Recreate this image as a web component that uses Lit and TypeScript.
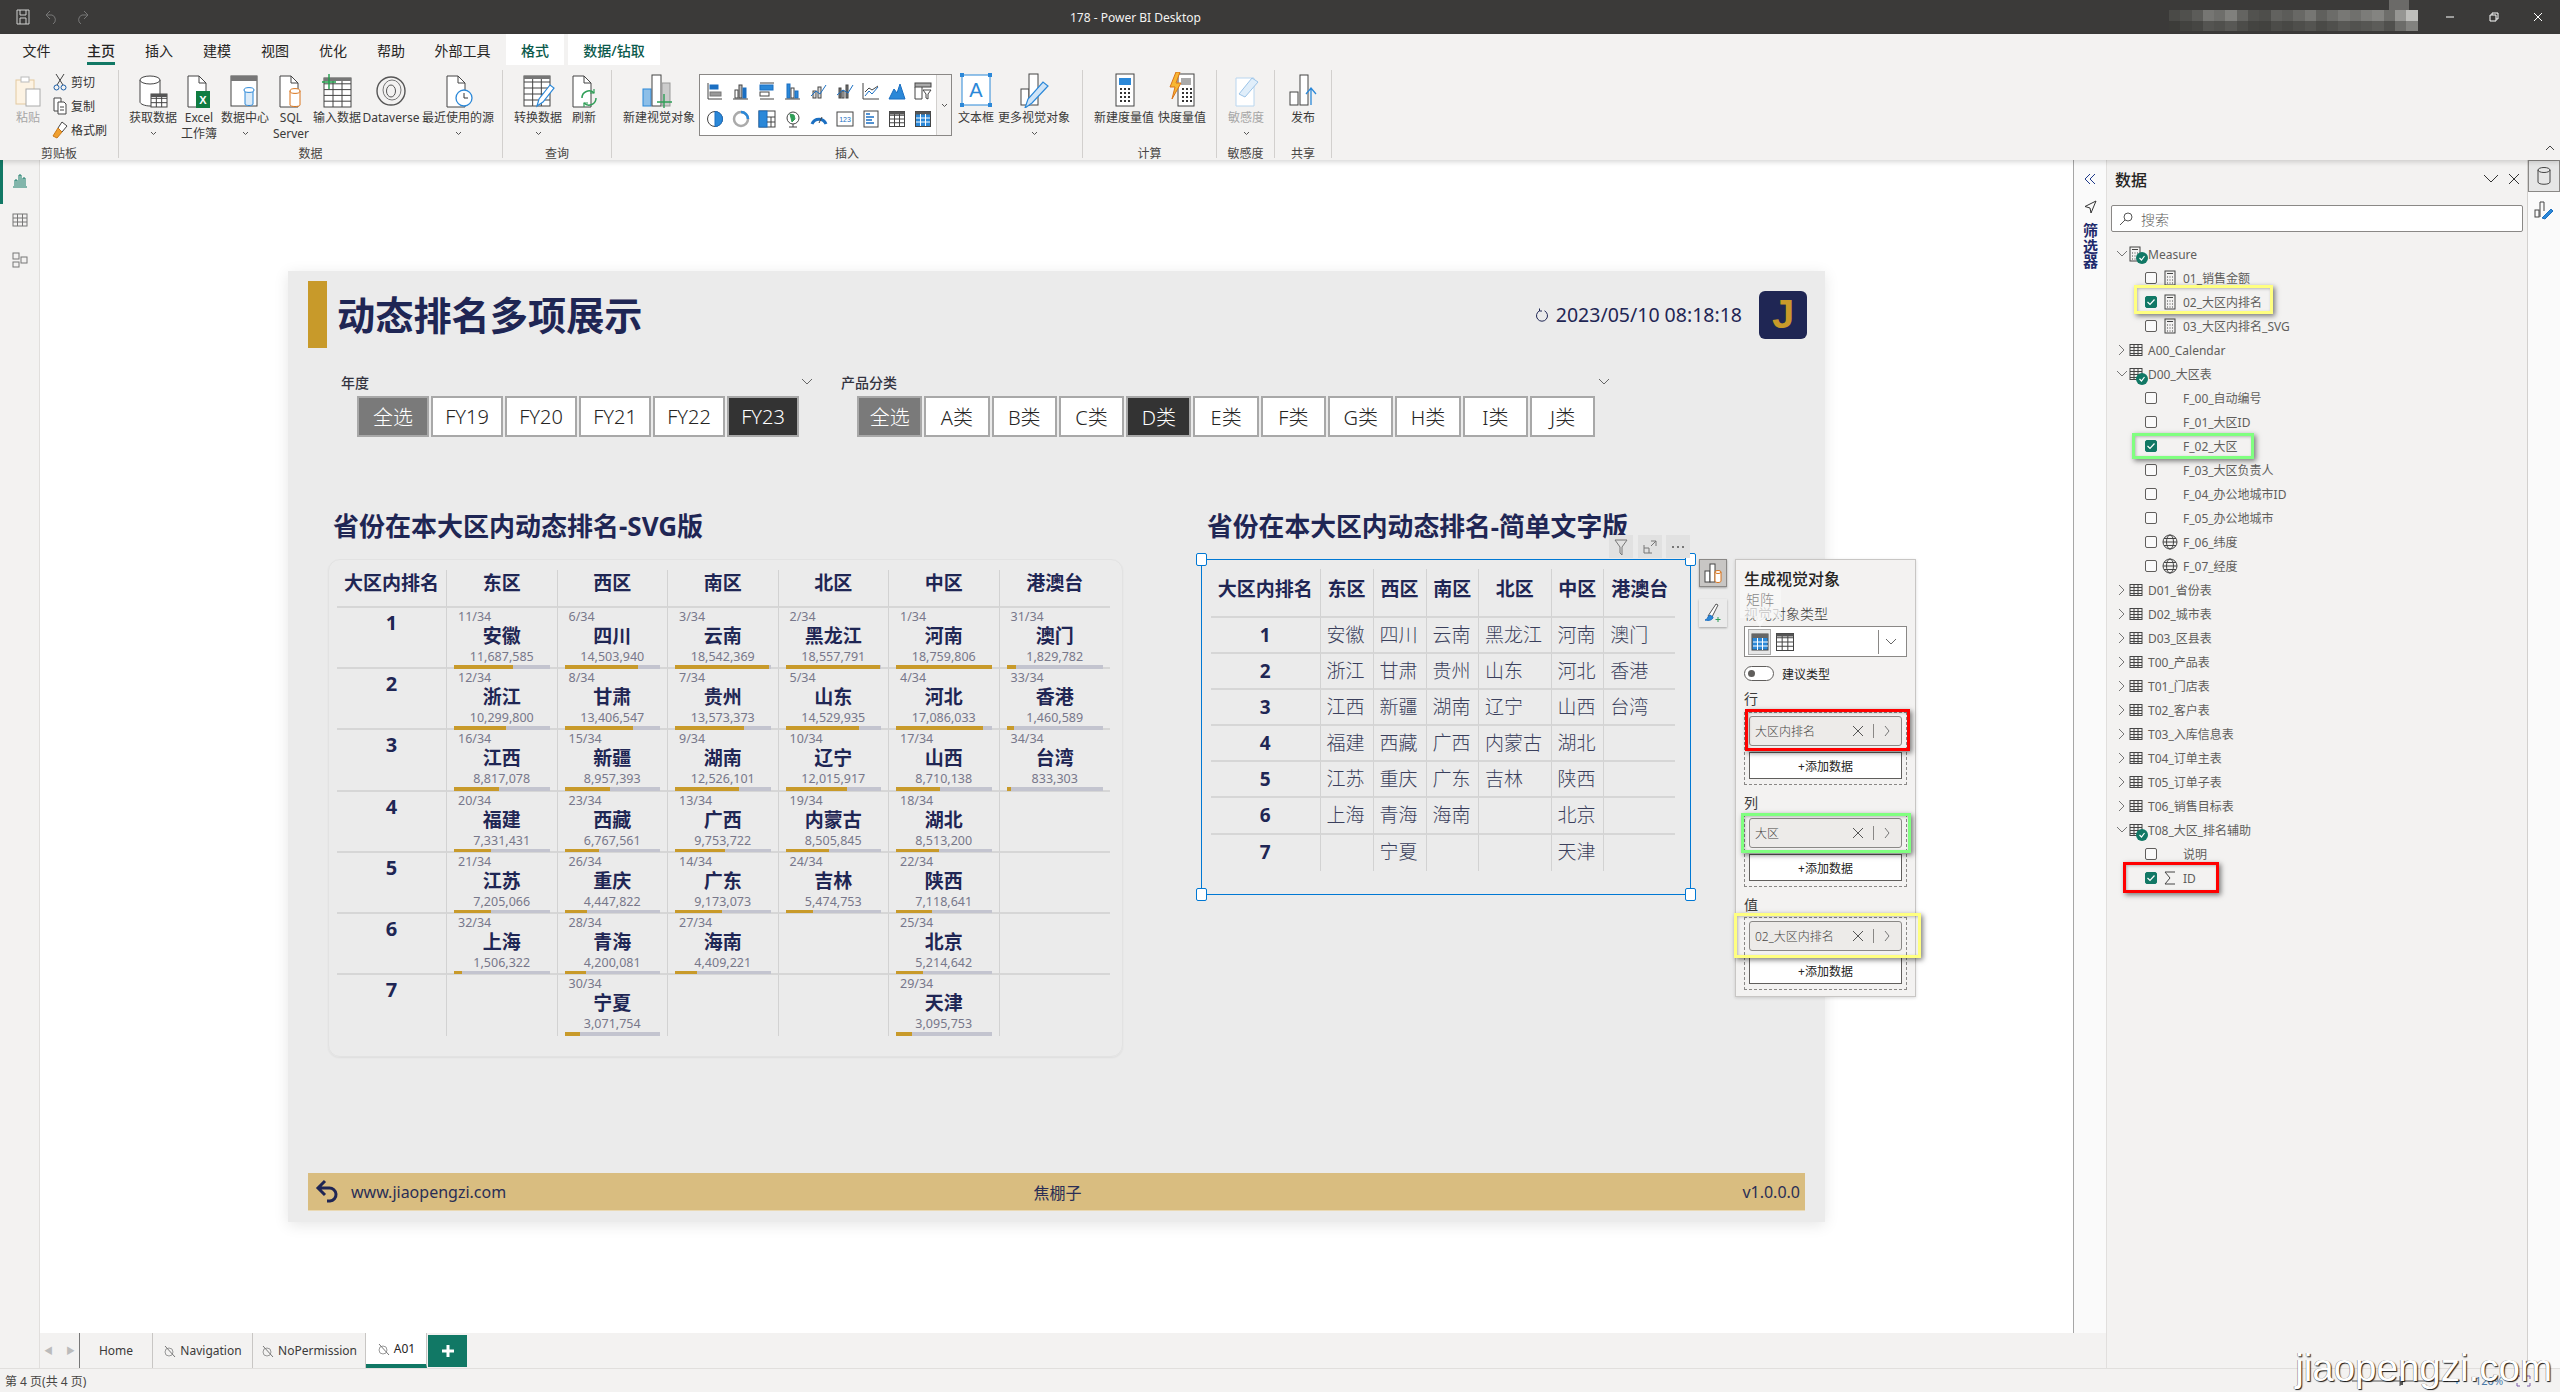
import { LitElement, html, css, svg } from "lit";
import { customElement } from "lit/decorators.js";

const MAX_VALUE = 18759806;

// small helper for inline icons
const ic = (w: number, h: number, body: unknown) => html`<svg
  width=${w}
  height=${h}
  viewBox="0 0 ${w} ${h}"
  fill="none"
  stroke="#444"
  stroke-width="1"
>${body}</svg>`;

const tablePart = (x: number, y: number, w: number, h: number, c: number, r: number, head = "#777") => {
  const lines: unknown[] = [];
  for (let i = 1; i < c; i++) lines.push(svg`<path d="M${x + (w * i) / c} ${y}v${h}"/>`);
  for (let i = 1; i < r; i++) lines.push(svg`<path d="M${x} ${y + (h * i) / r}h${w}"/>`);
  return svg`<rect x=${x} y=${y} width=${w} height=${h} fill="#fff"/>${lines}<rect x=${x} y=${y} width=${w} height="3" fill=${head} stroke="none"/>`;
};

const docPart = (stroke = "#444") =>
  svg`<path d="M6 2h11l7 7v24H6z" fill="#fff" stroke=${stroke}/><path d="M17 2v7h7" stroke=${stroke}/>`;

const R: Record<string, unknown> = {
  paste: ic(30, 34, svg`<rect x="3" y="6" width="18" height="24" fill="#fdf3e3" stroke="#e3c9a0"/><rect x="8" y="3" width="8" height="5" fill="#fff" stroke="#bbb"/><rect x="13" y="15" width="14" height="17" fill="#fff" stroke="#aaa"/>`),
  getdata: ic(34, 34, svg`<path d="M4 6v22c0 2 5 4 10 4s10-2 10-4V6" fill="#fff"/><ellipse cx="14" cy="6" rx="10" ry="4" fill="#fff"/>${tablePart(15, 20, 16, 13, 3, 3, "#555")}`),
  excel: ic(34, 34, svg`${docPart()}<rect x="14" y="17" width="14" height="17" fill="#107c41" stroke="none"/><text x="21" y="30" font-size="11" font-weight="700" fill="#fff" stroke="none" text-anchor="middle" font-family="Liberation Sans">X</text>`),
  hub: ic(34, 34, svg`<rect x="3" y="2" width="26" height="30" fill="#fff"/><rect x="3" y="2" width="26" height="5" fill="#777" stroke="none"/><path d="M17 16v14c0 2 8 2 8 0V16" fill="#dcebf8" stroke="#2b88d8"/><ellipse cx="21" cy="16" rx="5" ry="2.4" fill="#fff" stroke="#2b88d8"/>`),
  sql: ic(34, 34, svg`${docPart()}<path d="M16 17v14c0 2 10 2 10 0V17" fill="#fff" stroke="#d9731a"/><ellipse cx="21" cy="17" rx="5" ry="2.4" fill="#fff" stroke="#d9731a"/>`),
  enter: ic(34, 34, svg`${tablePart(4, 4, 27, 29, 3, 5)}<path d="M9 0v15M2 8h14" stroke="#1e9e4a" stroke-width="1.4"/>`),
  dataverse: ic(34, 34, svg`<ellipse cx="17" cy="17" rx="14" ry="14" stroke="#555" stroke-width="1.4"/><ellipse cx="18" cy="16" rx="9" ry="10" stroke="#777"/><ellipse cx="17" cy="17" rx="4.5" ry="6" stroke="#555"/>`),
  recent: ic(34, 34, svg`${docPart()}<circle cx="23" cy="24" r="8" fill="#fff" stroke="#2b88d8" stroke-width="1.3"/><path d="M23 19v5h4" stroke="#333"/>`),
  transform: ic(34, 34, svg`${tablePart(3, 2, 26, 30, 3, 5)}<path d="M16 32l2-7 11-14 4 3-11 14z" fill="#fff" stroke="#2b88d8" stroke-width="1.2"/>`),
  refresh: ic(34, 34, svg`${docPart()}<path d="M15 24a7 7 0 0 1 12-5M29 24a7 7 0 0 1-12 5" stroke="#2f9e57" stroke-width="1.5"/><path d="M27 15v4h-4M17 33v-4h4" stroke="#2f9e57" stroke-width="1.2"/>`),
  newvisual: ic(34, 36, svg`<rect x="1" y="17" width="8" height="17" fill="#8dbfe8" stroke="#2b88d8"/><rect x="10" y="3" width="9" height="31" fill="#fff"/><rect x="20" y="11" width="8" height="23" fill="#ccc" stroke="#999"/><path d="M22 22v14M15 30h15" stroke="#2f9e57" stroke-width="1.4"/>`),
  textbox: ic(34, 36, svg`<rect x="3" y="3" width="28" height="30" fill="#fff" stroke="#2b88d8"/><rect x="1" y="1" width="4" height="4" fill="#2b88d8" stroke="none"/><rect x="29" y="1" width="4" height="4" fill="#2b88d8" stroke="none"/><rect x="1" y="31" width="4" height="4" fill="#2b88d8" stroke="none"/><rect x="29" y="31" width="4" height="4" fill="#2b88d8" stroke="none"/><text x="17" y="25" font-size="20" fill="#2b88d8" stroke="none" text-anchor="middle" font-family="Liberation Sans">A</text>`),
  morevis: ic(34, 36, svg`<rect x="4" y="17" width="8" height="16" fill="#fff"/><rect x="12" y="2" width="9" height="31" fill="#fff"/><path d="M8 36l3-9 15-17 5 4-16 17z" fill="#cfe4f7" stroke="#2b88d8" stroke-width="1.2"/>`),
  measure: ic(30, 36, svg`<rect x="7" y="2" width="18" height="32" fill="#fff"/><rect x="10" y="6" width="12" height="7" fill="#2b88d8" stroke="none"/><path d="M11 17h2M15 17h2M19 17h2M11 21h2M15 21h2M19 21h2M11 25h2M15 25h2M19 25h2M11 29h2M15 29h2M19 29h2" stroke="#333" stroke-width="2"/>`),
  quick: ic(30, 36, svg`<rect x="11" y="2" width="16" height="32" fill="#fff"/><rect x="14" y="6" width="10" height="7" fill="#aaa" stroke="none"/><path d="M15 17h2M19 17h2M23 17h2M15 21h2M19 21h2M23 21h2M15 25h2M19 25h2M23 25h2M15 29h2M19 29h2M23 29h2" stroke="#333" stroke-width="2"/><path d="M9 0l-6 15h5l-3 12 9-16H9l4-11z" fill="#f7b733" stroke="#d9731a"/>`),
  sensitivity: ic(30, 36, svg`<path d="M5 6h18v28H5z" fill="#fff" stroke="#b9d6ef"/><path d="M8 22l13-16 6 4-13 15z" fill="#e0eefa" stroke="#9cc4e8"/>`),
  publish: ic(30, 36, svg`<rect x="2" y="20" width="8" height="13" fill="#fff"/><rect x="12" y="3" width="8" height="30" fill="#fff"/><path d="M23 33V17M18 22l5-6 5 6" stroke="#2b88d8" stroke-width="1.3"/>`),
};

const S: Record<string, unknown> = {
  cut: ic(14, 18, svg`<path d="M3 1l7 11M11 1L4 12"/><circle cx="3.5" cy="14.5" r="2.5" stroke="#1b5fa8"/><circle cx="10.5" cy="14.5" r="2.5" stroke="#1b5fa8"/>`),
  copy: ic(14, 18, svg`<path d="M1 1h7v13H1z" fill="#fff"/><path d="M5 5h6l2 2v10H5z" fill="#fff"/><path d="M7 10h4M7 13h4"/>`),
  brush: ic(16, 18, svg`<path d="M10 1l5 4-5 6-4-4z" fill="#fff"/><path d="M6 7l4 4-5 6-4-2z" fill="#f0a030" stroke="#c9791a"/>`),
};

const G: unknown[] = [
  ic(18, 18, svg`<path d="M2 1v16h14"/><rect x="4" y="3" width="8" height="4" fill="#1b6fc2" stroke="#1b6fc2"/><rect x="4" y="10" width="11" height="4" fill="#999" stroke="#777"/>`),
  ic(18, 18, svg`<rect x="3" y="8" width="3" height="8"/><rect x="7" y="3" width="3" height="13" fill="#bbb"/><rect x="11" y="6" width="3" height="10" fill="#1b6fc2" stroke="#1b6fc2"/><path d="M1 17h15"/>`),
  ic(18, 18, svg`<path d="M2 1h14M2 17h14"/><rect x="2" y="3" width="13" height="5" fill="#2b88d8" stroke="#1b6fc2"/><rect x="2" y="10" width="9" height="4" fill="#fff"/>`),
  ic(18, 18, svg`<rect x="3" y="2" width="3" height="14" fill="#2b88d8" stroke="#1b6fc2"/><rect x="7" y="6" width="3" height="10" fill="#fff"/><rect x="11" y="9" width="3" height="7" fill="#2b88d8" stroke="#1b6fc2"/><path d="M1 17h15"/>`),
  ic(18, 18, svg`<rect x="3" y="9" width="3" height="7" fill="#ddd"/><rect x="8" y="5" width="3" height="11" fill="#ddd"/><path d="M1 14l5-5 4 3 6-9" stroke="#1b6fc2"/>`),
  ic(18, 18, svg`<rect x="3" y="6" width="2" height="10" fill="#777"/><rect x="6" y="9" width="2" height="7" fill="#ccc"/><rect x="10" y="3" width="2" height="13" fill="#777"/><path d="M1 13l6-5 5 3 5-8" stroke="#1b6fc2"/>`),
  ic(18, 18, svg`<path d="M1 1v16h16"/><path d="M3 14l4-5 3 3 6-7" stroke="#1b6fc2"/><path d="M3 10l4-4 3 2 6-4"/>`),
  ic(18, 18, svg`<path d="M1 17l5-10 3 4 3-9 5 15z" fill="#2b88d8" stroke="#1b6fc2"/>`),
  ic(18, 18, svg`<rect x="1" y="1" width="16" height="4" fill="#aaa"/><path d="M1 5v12h7V5M9 8h8l-3 4v5l-2-1v-4z"/>`),
  ic(18, 18, svg`<circle cx="9" cy="9" r="7.5"/><path d="M9 9V1.5a7.5 7.5 0 0 1 0 15z" fill="#2b88d8" stroke="#1b6fc2"/>`),
  ic(18, 18, svg`<circle cx="9" cy="9" r="7" stroke="#aaa" stroke-width="2.5"/><path d="M9 2a7 7 0 0 1 7 7" stroke="#2b88d8" stroke-width="2.5"/>`),
  ic(18, 18, svg`<rect x="1" y="1" width="16" height="16"/><rect x="1" y="1" width="8" height="16" fill="#2b88d8" stroke="#1b6fc2"/><path d="M9 7h8M9 12h8M13 7v10"/>`),
  ic(18, 18, svg`<circle cx="9" cy="8" r="6"/><path d="M6 4l4 1 1 4-3 3z" fill="#2f9e57" stroke="#2f9e57"/><path d="M9 14v3M5 17h8"/>`),
  ic(18, 18, svg`<path d="M2 14a7.5 7.5 0 0 1 14 0" stroke="#1b6fc2" stroke-width="3"/><path d="M9 13l3-6"/>`),
  ic(18, 18, svg`<rect x="1" y="2" width="16" height="14"/><text x="9" y="12" font-size="7" fill="#1b6fc2" stroke="none" text-anchor="middle" font-family="Liberation Sans">123</text>`),
  ic(18, 18, svg`<rect x="2" y="1" width="14" height="16"/><path d="M4 4h4M4 7h8M4 10h6M4 13h8" stroke="#1b6fc2" stroke-width="1.5"/>`),
  ic(18, 18, svg`${tablePart(1.5, 1.5, 15, 15, 3, 4, "#555")}`),
  ic(18, 18, svg`<rect x="1.5" y="1.5" width="15" height="15" fill="#2b88d8"/><rect x="1.5" y="1.5" width="15" height="3" fill="#555" stroke="none"/><path d="M6.5 4v12M11.5 4v12M2 8h14M2 12h14" stroke="#fff"/>`),
];

type Cell = [string, string, string] | null;
const REGIONS = ["东区", "西区", "南区", "北区", "中区", "港澳台"];
const RANKS: Cell[][] = [
  [["11/34", "安徽", "11,687,585"], ["6/34", "四川", "14,503,940"], ["3/34", "云南", "18,542,369"], ["2/34", "黑龙江", "18,557,791"], ["1/34", "河南", "18,759,806"], ["31/34", "澳门", "1,829,782"]],
  [["12/34", "浙江", "10,299,800"], ["8/34", "甘肃", "13,406,547"], ["7/34", "贵州", "13,573,373"], ["5/34", "山东", "14,529,935"], ["4/34", "河北", "17,086,033"], ["33/34", "香港", "1,460,589"]],
  [["16/34", "江西", "8,817,078"], ["15/34", "新疆", "8,957,393"], ["9/34", "湖南", "12,526,101"], ["10/34", "辽宁", "12,015,917"], ["17/34", "山西", "8,710,138"], ["34/34", "台湾", "833,303"]],
  [["20/34", "福建", "7,331,431"], ["23/34", "西藏", "6,767,561"], ["13/34", "广西", "9,753,722"], ["19/34", "内蒙古", "8,505,845"], ["18/34", "湖北", "8,513,200"], null],
  [["21/34", "江苏", "7,205,066"], ["26/34", "重庆", "4,447,822"], ["14/34", "广东", "9,173,073"], ["24/34", "吉林", "5,474,753"], ["22/34", "陕西", "7,118,641"], null],
  [["32/34", "上海", "1,506,322"], ["28/34", "青海", "4,200,081"], ["27/34", "海南", "4,409,221"], null, ["25/34", "北京", "5,214,642"], null],
  [null, ["30/34", "宁夏", "3,071,754"], null, null, ["29/34", "天津", "3,095,753"], null],
];

const tableIcon = ic(14, 14, svg`<rect x="1" y="1.5" width="12" height="11"/><path d="M1 4.5h12M1 7.5h12M1 10.5h12M5 1.5v11M9 1.5v11"/>`);
const calcIcon = ic(12, 16, svg`<rect x="1" y="1" width="10" height="14"/><path d="M3 3.5h6M3 7h1M5.5 7h1M8 7h1M3 10h1M5.5 10h1M8 10h1M3 13h1M5.5 13h1M8 13h1"/>`);
const globeIcon = ic(16, 16, svg`<circle cx="8" cy="8" r="7"/><ellipse cx="8" cy="8" rx="3.5" ry="7"/><path d="M1 8h14M2 4.5h12M2 11.5h12"/>`);
const sigmaIcon = ic(12, 16, svg`<path d="M11 2H1l5 6-5 6h10"/>`);
const caret = ic(7, 5, svg`<path d="M1 1l2.500 2.500L6 1" stroke="#555"/>`);
const badge = html`<span class="badge">${ic(8, 8, svg`<path d="M1.5 4l2 2 3-4" stroke="#fff" stroke-width="1.2"/>`)}</span>`;

type Row = { label: string; kind: "tgroup" | "child"; open?: boolean; icon?: string; used?: boolean; on?: boolean; hl?: string };
const TREE: Row[] = [
  { label: "Measure", kind: "tgroup", open: true, icon: "calc", used: true },
  { label: "01_销售金额", kind: "child", icon: "calc" },
  { label: "02_大区内排名", kind: "child", icon: "calc", on: true, hl: "hl-tree-y" },
  { label: "03_大区内排名_SVG", kind: "child", icon: "calc" },
  { label: "A00_Calendar", kind: "tgroup" },
  { label: "D00_大区表", kind: "tgroup", open: true, used: true },
  { label: "F_00_自动编号", kind: "child" },
  { label: "F_01_大区ID", kind: "child" },
  { label: "F_02_大区", kind: "child", on: true, hl: "hl-tree-g" },
  { label: "F_03_大区负责人", kind: "child" },
  { label: "F_04_办公地城市ID", kind: "child" },
  { label: "F_05_办公地城市", kind: "child" },
  { label: "F_06_纬度", kind: "child", icon: "globe" },
  { label: "F_07_经度", kind: "child", icon: "globe" },
  { label: "D01_省份表", kind: "tgroup" },
  { label: "D02_城市表", kind: "tgroup" },
  { label: "D03_区县表", kind: "tgroup" },
  { label: "T00_产品表", kind: "tgroup" },
  { label: "T01_门店表", kind: "tgroup" },
  { label: "T02_客户表", kind: "tgroup" },
  { label: "T03_入库信息表", kind: "tgroup" },
  { label: "T04_订单主表", kind: "tgroup" },
  { label: "T05_订单子表", kind: "tgroup" },
  { label: "T06_销售目标表", kind: "tgroup" },
  { label: "T08_大区_排名辅助", kind: "tgroup", open: true, used: true },
  { label: "说明", kind: "child" },
  { label: "ID", kind: "child", icon: "sigma", on: true, hl: "hl-tree-r" },
];

const BLUR = [
  [74, 80, 92, 118, 110, 128, 100, 82, 78, 98, 92, 104, 118, 96, 108, 120, 112, 124, 132, 110, 150, 190],
  [60, 66, 70, 84, 80, 88, 76, 68, 66, 76, 72, 78, 84, 74, 80, 88, 82, 86, 92, 80, 108, 130],
];

@customElement("app-root")
export class AppRoot extends LitElement {
  static styles = css`
    :host {
      display: block;
      width: 2560px;
      height: 1392px;
      overflow: hidden;
      position: relative;
      font-family: "Noto Sans", "Noto Sans CJK SC", sans-serif;
      font-size: 12px;
      color: #333;
      background: #f3f2f1;
      --navy: #1f2654;
    }

    /* title bar */
    .titlebar {
      height: 34px;
      background: #3b3a39;
      display: flex;
      align-items: center;
      color: #fff;
      position: relative;
    }
    .tb-icons {
      display: flex;
      gap: 14px;
      margin-left: 16px;
      width: 1000px;
    }
    .tb-title {
      margin-left: 54px;
      font-size: 12px;
      color: #f3f2f1;
    }
    .blur {
      position: absolute;
      left: 2169px;
      top: 10px;
      display: grid;
      grid-template-columns: repeat(22, 11.3px);
      grid-auto-rows: 10.5px;
    }
    .blur-top {
      position: absolute;
      left: 2389px;
      top: 0;
      width: 20px;
      height: 10px;
      background: #6b6a68;
    }
    .win {
      position: absolute;
      right: 0;
      top: 0;
      height: 34px;
      display: flex;
      align-items: center;
    }
    .win span {
      width: 44px;
      display: flex;
      justify-content: center;
    }

    /* ribbon */
    .ribbon {
      height: 126px;
      background: #f3f2f1;
      box-shadow: 0 2px 5px rgba(0, 0, 0, 0.16);
      position: relative;
      z-index: 3;
    }
    .tabs {
      height: 31px;
      display: flex;
      font-size: 14px;
      color: #252423;
    }
    .tab {
      display: flex;
      align-items: center;
      justify-content: center;
      position: relative;
      width: 58px;
    }
    .tab.first {
      width: 43px;
      margin-left: 15px;
      margin-right: 14px;
    }
    .tab.wide {
      width: 85px;
      margin-right: 1px;
    }
    .tab.ctx {
      background: #fff;
      color: #0b5a4c;
      font-weight: 500;
    }
    .tab.ctx2 {
      width: 92px;
      margin-left: 4px;
    }
    .tab.active {
      font-weight: 500;
    }
    .tab.active::after {
      content: "";
      position: absolute;
      left: 15px;
      right: 15px;
      bottom: 0;
      height: 3px;
      background: #117865;
    }
    .groups {
      display: flex;
      height: 95px;
    }
    .rgroup {
      display: flex;
      flex-direction: column;
      position: relative;
      margin-top: 5px;
      height: 88px;
      border-right: 1px solid #d2d0ce;
      box-sizing: border-box;
    }
    .g-clip { width: 119px; }
    .g-data { width: 384px; padding-left: 7px; }
    .g-query { width: 109px; padding-left: 9px; }
    .g-insert { width: 471px; padding-left: 7px; }
    .g-calc { width: 134px; padding-left: 11px; }
    .g-sens { width: 58px; }
    .g-share { width: 57px; }
    .g-items {
      display: flex;
      flex: 1;
      box-sizing: border-box;
      padding-top: 2px;
      min-height: 0;
    }
    .g-label {
      text-align: center;
      height: 15px;
      line-height: 15px;
      margin-bottom: -3px;
      color: #484644;
    }
    .g-data .g-label { margin-left: -7px; }
    .g-query .g-label { margin-left: -9px; }
    .g-insert .g-label { margin-left: -7px; }
    .g-calc .g-label { margin-left: -11px; }
    .item {
      display: flex;
      flex-direction: column;
      align-items: center;
      width: 54px;
      flex: none;
      line-height: 16px;
      text-align: center;
      color: #3b3a39;
    }
    .item .pic {
      height: 36px;
      display: flex;
      align-items: flex-end;
      justify-content: center;
      margin-bottom: 2px;
    }
    .item .more {
      height: 15px;
      display: flex;
      align-items: center;
    }
    .w38 { width: 38px; }
    .w40 { width: 40px; }
    .w44 { width: 44px; }
    .w52 { width: 52px; }
    .w56 { width: 56px; }
    .w58 { width: 58px; }
    .w60 { width: 60px; }
    .w72 { width: 72px; }
    .w80 { width: 80px; }
    .off { color: #a6a6a6; }
    .paste {
      margin-left: 8px;
      width: 40px;
    }
    .small-col {
      display: flex;
      flex-direction: column;
      gap: 5px;
      margin-left: 4px;
    }
    .small-row {
      display: flex;
      align-items: center;
      gap: 3px;
      height: 19px;
    }
    .small-row .si {
      width: 16px;
      display: flex;
      justify-content: center;
    }
    .gallery {
      width: 253px;
      height: 62px;
      background: #fff;
      border: 1px solid #8a8886;
      box-sizing: border-box;
      display: flex;
      margin: 2px 2px 0 0;
      flex: none;
    }
    .g-grid {
      display: grid;
      grid-template-columns: repeat(9, 26px);
      grid-template-rows: 28px 28px;
      padding: 2px 0 0 2px;
      flex: 1;
    }
    .g-grid span {
      display: flex;
      align-items: center;
      justify-content: center;
    }
    .g-more {
      width: 16px;
      background: #f3f2f1;
      border-left: 1px solid #d2d0ce;
      display: flex;
      justify-content: center;
      align-items: center;
    }
    .collapse {
      position: absolute;
      right: 5px;
      bottom: 5px;
    }

    /* workspace */
    .work {
      display: flex;
      height: 1208px;
    }
    .rail {
      width: 40px;
      flex: none;
      box-sizing: border-box;
      border-right: 1px solid #e1dfdd;
      display: flex;
      flex-direction: column;
      align-items: center;
      gap: 24px;
      padding-top: 12px;
      position: relative;
    }
    .rail::before {
      content: "";
      position: absolute;
      left: 0;
      top: 0;
      width: 3px;
      height: 44px;
      background: #117865;
    }
    .left-block {
      width: 2066px;
      flex: none;
      display: flex;
      flex-direction: column;
    }
    .upper {
      display: flex;
      height: 1173px;
    }
    .canvas {
      width: 2033px;
      flex: none;
      background: #fff;
      box-sizing: border-box;
      padding: 111px 0 0 248px;
    }
    .filters {
      width: 33px;
      flex: none;
      box-sizing: border-box;
      border-left: 1px solid #a6a6a6;
      background: #fafafa;
      display: flex;
      flex-direction: column;
      align-items: center;
      padding-top: 13px;
      gap: 15px;
    }
    .vtext {
      writing-mode: vertical-rl;
      font-size: 15px;
      font-weight: 700;
      line-height: 16px;
      margin-top: -6px;
      letter-spacing: 0.5px;
      color: #1f2a6b;
    }
    .pagetabs {
      flex: 1;
      display: flex;
      font-size: 12px;
      color: #3b3a39;
    }
    .pt {
      display: flex;
      align-items: center;
      justify-content: center;
      gap: 3px;
      box-sizing: border-box;
      border-right: 1px solid #c8c6c4;
      height: 35px;
    }
    .pt-nav { width: 40px; gap: 13px; color: #bbb; border-right-color: #777; font-size: 9px; }
    .pt-home { width: 73px; }
    .pt-nav2 { width: 100px; }
    .pt-noperm { width: 113px; }
    .pt-a01 {
      width: 61px;
      background: #fff;
      color: #252423;
      border-bottom: 4px solid #117865;
    }
    .pt-add {
      width: 39px;
      height: 32px;
      margin: 2px 0 0 1px;
      background: #117865;
      display: flex;
      align-items: center;
      justify-content: center;
    }

    /* report page */
    .page {
      width: 1537px;
      height: 951px;
      background: #ebebeb;
      box-shadow: 0 3px 14px rgba(0, 0, 0, 0.1);
      box-sizing: border-box;
      padding: 10px 20px 11px;
      display: flex;
      flex-direction: column;
      color: var(--navy);
    }
    .head {
      display: flex;
      align-items: center;
      height: 67px;
      flex: none;
    }
    .head .mark {
      width: 19px;
      height: 67px;
      background: #c89a2a;
    }
    .head h1 {
      margin: 0 0 0 10px;
      font-size: 38.2px;
      line-height: 72px;
      font-weight: 700;
    }
    .stamp {
      margin-left: auto;
      font-size: 19.5px;
      display: flex;
      align-items: center;
      gap: 7px;
      color: var(--navy);
    }
    .logo {
      width: 48px;
      height: 48px;
      margin: 0 -2px 0 17px;
      border-radius: 6px;
      background: var(--navy);
      color: #c89a2a;
      font-size: 40px;
      font-weight: 700;
      display: flex;
      align-items: center;
      justify-content: center;
      font-family: "Liberation Sans", sans-serif;
    }
    .slicers {
      display: flex;
      margin: 24px 0 0 33px;
      gap: 26px;
      flex: none;
    }
    .slicer { width: 474px; }
    .slicer.cat { width: 771px; }
    .sl-head {
      height: 20px;
      display: flex;
      align-items: center;
      justify-content: space-between;
      font-size: 14px;
      font-weight: 500;
      color: #33333f;
      padding-right: 2px;
    }
    .sl-btns {
      display: flex;
      gap: 2px;
      margin: 4px 0 0 16px;
    }
    .sl-btn {
      width: 72px;
      height: 41px;
      box-sizing: border-box;
      background: #fff;
      border: 2px solid #a8a8a8;
      color: #252423;
      font-size: 20px;
      display: flex;
      align-items: center;
      justify-content: center;
      font-weight: 300;
    }
    .cat .sl-btn { width: 65.3px; }
    .sl-btn.all {
      background: #7a7a7a;
      color: #fff;
    }
    .sl-btn.sel {
      background: #333;
      color: #fff;
    }
    .sections {
      display: grid;
      grid-template-columns: 795px 490px;
      column-gap: 78px;
      margin: 73px 0 0 20px;
      flex: none;
    }
    .sections h2 {
      margin: 0 0 17px;
      font-size: 26px;
      line-height: 32px;
      font-weight: 700;
      padding-left: 5px;
      white-space: nowrap;
    }
    .sections .col-right h2 {
      padding-left: 6px;
      font-size: 25.8px;
    }
    .card {
      height: 498px;
      box-sizing: border-box;
      border: 1px solid #e2e2e2;
      border-radius: 12px;
      padding: 10px 0 0 8px;
      box-shadow: 0 1px 2px rgba(0, 0, 0, 0.06);
    }
    .m1 {
      display: grid;
      grid-template-columns: 110px repeat(6, 110.5px);
      grid-template-rows: 38px repeat(7, 61.2px);
    }
    .m1 > div {
      box-sizing: border-box;
      border-right: 1.5px solid #d2d2d2;
      border-bottom: 2px solid #d6d6d6;
    }
    .m1 > div.last {
      border-bottom: 0;
    }
    .m1 > div.r-end {
      border-right: 0;
    }
    .m1-h {
      font-size: 19px;
      font-weight: 700;
      line-height: 26px;
      text-align: center;
    }
    .m1-r {
      font-size: 20px;
      font-weight: 700;
      text-align: center;
      line-height: 30px;
    }
    .cell {
      padding: 1px 7px 0;
    }
    .c-rank {
      height: 16px;
      line-height: 16px;
      font-size: 12.5px;
      color: #77778a;
      padding-left: 4px;
    }
    .c-name {
      height: 22px;
      line-height: 22px;
      font-size: 19px;
      font-weight: 700;
      text-align: center;
    }
    .c-val {
      margin-top: 2px;
      height: 16px;
      line-height: 16px;
      font-size: 12.5px;
      color: #77778a;
      text-align: center;
    }
    .c-bar {
      height: 3.5px;
      background: #c3c4cf;
    }
    .c-bar i {
      display: block;
      height: 100%;
      background: #c89a2a;
    }

    .vis-row {
      display: flex;
      gap: 8px;
      width: 740px;
    }
    .visual {
      width: 490px;
      height: 336px;
      flex: none;
      box-sizing: border-box;
      border: 1.5px solid #0078d4;
      padding: 9px 0 0 9px;
      position: relative;
    }
    .handle {
      position: absolute;
      width: 9px;
      height: 11px;
      background: #fff;
      border: 1px solid #0078d4;
      border-radius: 2px;
    }
    .h-tl { left: -6px; top: -7px; }
    .h-tr { right: -6px; top: -7px; }
    .h-bl { left: -6px; bottom: -7px; }
    .h-br { right: -6px; bottom: -7px; }
    .vis-head {
      position: absolute;
      right: 0;
      top: -25px;
      display: flex;
      gap: 4.5px;
    }
    .vis-head span {
      width: 24px;
      height: 23px;
      background: #e1e1e1;
      display: flex;
      align-items: center;
      justify-content: center;
    }
    .m2 {
      display: grid;
      grid-template-columns: 109.5px 53px 53px 52.5px 72.5px 52.7px 71px;
      grid-template-rows: 49px repeat(6, 36.1px) 36px;
    }
    .m2 > div {
      box-sizing: border-box;
      border-right: 1.5px solid #d2d2d2;
      border-bottom: 2px solid #d6d6d6;
      font-size: 19px;
      line-height: 35px;
      padding-left: 6px;
      color: #3a3f5c;
      white-space: nowrap;
      font-weight: 300;
    }
    .m2 > div.m2-h {
      font-weight: 700;
      color: var(--navy);
      line-height: 40px;
      text-align: center;
      padding-left: 0;
    }
    .m2 > div.m2-r {
      font-weight: 700;
      color: var(--navy);
      text-align: center;
      padding-left: 0;
    }
    .m2 > div.last {
      border-bottom: 0;
    }
    .m2 > div.r-end {
      border-right: 0;
    }
    .side-tabs {
      display: flex;
      flex-direction: column;
      gap: 12px;
      flex: none;
      width: 28px;
    }
    .side-tabs span {
      height: 28px;
      background: #ebebeb;
      box-shadow: 0 1px 2px rgba(0, 0, 0, 0.3);
      display: flex;
      align-items: center;
      justify-content: center;
    }
    .side-tabs span.on {
      background: #c8c6c4;
      border: 1px solid #8a8886;
      box-sizing: border-box;
    }
    .build {
      width: 181px;
      height: 438px;
      flex: none;
      background: #f3f2f1;
      border: 1px solid #c8c6c4;
      box-sizing: border-box;
      padding: 7px 8px 0;
      box-shadow: 0 1px 3px rgba(0, 0, 0, 0.15);
      color: #252423;
      position: relative;
    }
    .build h3 {
      margin: 0;
      font-size: 16px;
      line-height: 24px;
      font-weight: 500;
    }
    .b-label {
      font-size: 14px;
      line-height: 20px;
      color: #3b3a39;
    }
    .b-first { margin-top: 13px; font-weight: 300; }
    .combo {
      margin-top: 2px;
      height: 31px;
      box-sizing: border-box;
      background: #fff;
      border: 1px solid #8a8886;
      display: flex;
      align-items: center;
      padding-left: 3px;
    }
    .combo .cur {
      width: 23px;
      height: 26px;
      background: #e6e6e6;
      border: 1px solid #aaa;
      box-sizing: border-box;
      display: flex;
      align-items: center;
      justify-content: center;
      margin-right: 5px;
    }
    .combo .sep {
      margin-left: auto;
      width: 6px;
      border-left: 1px solid #8a8886;
      height: 24px;
    }
    .combo .cv {
      margin-right: 9px;
      display: flex;
    }
    .suggest {
      margin-top: 9px;
      height: 15px;
      display: flex;
      align-items: center;
      gap: 8px;
      font-size: 12px;
    }
    .toggle {
      width: 30px;
      height: 15px;
      box-sizing: border-box;
      border: 1px solid #605e5c;
      border-radius: 8px;
      background: #fff;
      display: flex;
      align-items: center;
      padding-left: 3px;
      flex: none;
    }
    .toggle i {
      width: 7px;
      height: 7px;
      border-radius: 50%;
      background: #605e5c;
    }
    .well-h { margin-top: 8px; }
    .well {
      position: relative;
      height: 73px;
      box-sizing: border-box;
      border: 1px dashed #8a8886;
      padding: 3px 4px 0;
      margin-top: 3px;
    }
    .well-1 { margin-top: 1px; }
    .well-2 { margin-top: 2px; }
    .pill {
      height: 30px;
      box-sizing: border-box;
      border: 1px solid #8a8886;
      border-radius: 3px;
      background: #edebe9;
      display: flex;
      align-items: center;
      padding: 0 10px 0 5px;
      font-size: 12px;
      color: #484644;
      font-weight: 300;
    }
    .pill .x {
      margin-left: auto;
      display: flex;
      align-items: center;
      gap: 9px;
    }
    .pill .bar {
      width: 1px;
      height: 14px;
      background: #8a8886;
    }
    .add {
      height: 27px;
      margin-top: 6px;
      box-sizing: border-box;
      border: 1px solid #605e5c;
      background: #fff;
      display: flex;
      align-items: center;
      justify-content: center;
      font-size: 12px;
    }
    .hl {
      position: absolute;
      box-sizing: border-box;
      border: 3px solid;
      box-shadow: 2px 2px 5px rgba(0, 0, 0, 0.5), inset 1px 1px 3px rgba(0, 0, 0, 0.25);
      pointer-events: none;
      z-index: 2;
    }
    .hl-r { border-color: #ff0000; }
    .hl-g { border-color: #80ff80; }
    .hl-y { border-color: #ffff80; }
    .well .hl-r { left: 0; top: -4px; width: 165px; height: 42px; }
    .well .hl-g { left: -4px; top: -2px; width: 170px; height: 40px; }
    .well .hl-y { left: -11px; top: -5px; width: 187px; height: 45px; }
    .tip {
      position: absolute;
      left: 3.5px;
      top: 26px;
      width: 41px;
      height: 32px;
      background: rgba(248, 248, 248, 0.72);
      font-size: 14px;
      color: #888;
      font-weight: 300;
      text-align: center;
      line-height: 28px;
    }
    .tip::after {
      content: "";
      position: absolute;
      left: 14px;
      top: 32px;
      border: 6px solid transparent;
      border-top: 9px solid rgba(248, 248, 248, 0.9);
    }
    .footer {
      margin-top: auto;
      height: 38px;
      flex: none;
      box-sizing: border-box;
      border-bottom: 1px solid #ead9b3;
      background: #d9bd80;
      display: grid;
      grid-template-columns: 1fr auto 1fr;
      align-items: center;
      font-size: 16px;
      padding: 0 5px 0 7px;
      color: #2a2e55;
    }
    .footer .url {
      display: flex;
      align-items: center;
      gap: 10px;
    }
    .footer .ver {
      text-align: right;
    }

    /* data pane */
    .fields {
      width: 422px;
      flex: none;
      box-sizing: border-box;
      border-left: 1px solid #e1dfdd;
      border-right: 1px solid #d2d0ce;
      background: #f3f2f1;
      padding-top: 1px;
    }
    .f-head {
      height: 36px;
      margin-bottom: 8px;
      display: flex;
      align-items: center;
      padding: 0 7px 0 8px;
      font-size: 16px;
      font-weight: 500;
      color: #252423;
      gap: 9px;
    }
    .f-head b {
      font-weight: 500;
      margin-right: auto;
    }
    .search {
      margin: 0 4px;
      height: 27px;
      box-sizing: border-box;
      border: 1px solid #8a8886;
      border-radius: 2px;
      background: #fff;
      display: flex;
      align-items: center;
      padding-left: 7px;
      gap: 8px;
      font-size: 14px;
      color: #605e5c;
      font-weight: 300;
    }
    .tree {
      margin-top: 10px;
    }
    .row {
      height: 24px;
      display: flex;
      align-items: center;
      position: relative;
      color: #605e5c;
      white-space: nowrap;
    }
    .row.tgroup {
      padding-left: 7px;
    }
    .row .chev {
      width: 15px;
      display: flex;
      justify-content: center;
      flex: none;
    }
    .row .tic {
      width: 19px;
      flex: none;
      display: flex;
      justify-content: flex-start;
      position: relative;
    }
    .row.child {
      padding-left: 38px;
    }
    .row.child .box {
      width: 12px;
      height: 12px;
      box-sizing: border-box;
      border: 1px solid #605e5c;
      border-radius: 2px;
      background: #fafafa;
      flex: none;
    }
    .row.child .box.on {
      background: #117865;
      border-color: #117865;
      display: flex;
      align-items: center;
      justify-content: center;
    }
    .row.child .tic {
      width: 26px;
      justify-content: center;
    }
    .badge {
      position: absolute;
      left: 7px;
      top: 6px;
      width: 12px;
      height: 12px;
      border-radius: 50%;
      background: #117865;
      display: flex;
      align-items: center;
      justify-content: center;
    }
    .row .hl-tree-y { left: 27px; top: -5px; width: 139px; height: 29px; border-color: #ffff80; }
    .row .hl-tree-g { left: 25px; top: -1px; width: 122px; height: 26px; border-color: #80ff80; }
    .row .hl-tree-r { left: 16px; top: -4px; width: 96px; height: 31px; border-color: #ff0000; }
    .strip {
      width: 32px;
      flex: none;
      background: #fafafa;
    }
    .strip span {
      height: 32px;
      display: flex;
      align-items: center;
      justify-content: center;
      margin-bottom: 2px;
    }
    .strip span.on {
      background: #e6e6e6;
      border: 1px solid #8a8886;
      box-sizing: border-box;
    }

    /* status */
    .status {
      height: 24px;
      box-sizing: border-box;
      border-top: 1px solid #e1dfdd;
      background: #f3f2f1;
      display: flex;
      align-items: center;
      padding-left: 5px;
      color: #484644;
      position: relative;
    }
    .zoom {
      position: absolute;
      left: 2338px;
      top: 4px;
      display: flex;
      align-items: center;
      gap: 13px;
      color: #4a7aa8;
      font-size: 11px;
    }
    .watermark {
      position: absolute;
      right: 8px;
      bottom: 5px;
      font-family: "Liberation Sans", sans-serif;
      font-size: 38.5px;
      line-height: 38px;
      color: #fff;
      text-shadow: 1px 1px 1px rgba(0, 0, 0, 0.9), -0.5px 0 0 rgba(0, 0, 0, 0.5);
      z-index: 5;
    }
  `;

  private ribbonItem(pic: unknown, label: unknown, cls = "w52", more = false) {
    return html`<div class="item ${cls}">
      <div class="pic">${pic}</div>
      <div>${label}</div>
      ${more ? html`<div class="more">${caret}</div>` : ""}
    </div>`;
  }

  private renderTitlebar() {
    return html`<div class="titlebar">
      <div class="tb-icons">
        ${ic(14, 16, svg`<path d="M1 1h12v14H1zM4 1v5h6V1M4 15v-6h6v6" stroke="#d0d0d0"/>`)}
        ${ic(16, 16, svg`<path d="M6 2L2 6l4 4M2 6h6a5 5 0 0 1 1 9" stroke="#777"/>`)}
        ${ic(16, 16, svg`<path d="M10 2l4 4-4 4M14 6H8a5 5 0 0 0-1 9" stroke="#777"/>`)}
      </div>
      <span class="tb-title">178 - Power BI Desktop</span>
      <div class="blur-top"></div>
      <div class="blur">
        ${BLUR.map((row) =>
          row.map((v) => html`<i style="background:rgb(${v},${v},${v - 3})"></i>`)
        )}
      </div>
      <div class="win">
        <span>${ic(10, 10, svg`<path d="M1 5h8" stroke="#fff"/>`)}</span>
        <span>${ic(10, 10, svg`<path d="M1 3h6v6H1zM3 3V1h6v6H7" stroke="#fff"/>`)}</span>
        <span>${ic(10, 10, svg`<path d="M1 1l8 8M9 1l-8 8" stroke="#fff"/>`)}</span>
      </div>
    </div>`;
  }

  private renderRibbon() {
    return html`<div class="ribbon">
      <div class="tabs">
        <div class="tab first">文件</div>
        <div class="tab active">主页</div>
        <div class="tab">插入</div>
        <div class="tab">建模</div>
        <div class="tab">视图</div>
        <div class="tab">优化</div>
        <div class="tab">帮助</div>
        <div class="tab wide">外部工具</div>
        <div class="tab ctx">格式</div>
        <div class="tab ctx ctx2">数据/钻取</div>
      </div>
      <div class="groups">
        <div class="rgroup g-clip">
          <div class="g-items">
            <div class="item paste off">
              <div class="pic">${R.paste}</div>
              <div>粘贴</div>
            </div>
            <div class="small-col">
              <div class="small-row"><span class="si">${S.cut}</span>剪切</div>
              <div class="small-row"><span class="si">${S.copy}</span>复制</div>
              <div class="small-row"><span class="si">${S.brush}</span>格式刷</div>
            </div>
          </div>
          <div class="g-label">剪贴板</div>
        </div>
        <div class="rgroup g-data">
          <div class="g-items">
            ${this.ribbonItem(R.getdata, "获取数据", "", true)}
            ${this.ribbonItem(R.excel, html`Excel<br />工作簿`, "w38")}
            ${this.ribbonItem(R.hub, "数据中心", "", true)}
            ${this.ribbonItem(R.sql, html`SQL<br />Server`, "w38")}
            ${this.ribbonItem(R.enter, "输入数据", "")}
            ${this.ribbonItem(R.dataverse, "Dataverse", "")}
            ${this.ribbonItem(R.recent, "最近使用的源", "w80", true)}
          </div>
          <div class="g-label">数据</div>
        </div>
        <div class="rgroup g-query">
          <div class="g-items">
            ${this.ribbonItem(R.transform, "转换数据", "w52", true)}
            ${this.ribbonItem(R.refresh, "刷新", "w40")}
          </div>
          <div class="g-label">查询</div>
        </div>
        <div class="rgroup g-insert">
          <div class="g-items">
            ${this.ribbonItem(R.newvisual, "新建视觉对象", "w80")}
            <div class="gallery">
              <div class="g-grid">${G.map((g) => html`<span>${g}</span>`)}</div>
              <div class="g-more">${caret}</div>
            </div>
            ${this.ribbonItem(R.textbox, "文本框", "w44")}
            ${this.ribbonItem(R.morevis, "更多视觉对象", "w72", true)}
          </div>
          <div class="g-label">插入</div>
        </div>
        <div class="rgroup g-calc">
          <div class="g-items">
            ${this.ribbonItem(R.measure, "新建度量值", "w60")}
            ${this.ribbonItem(R.quick, "快度量值", "w56")}
          </div>
          <div class="g-label">计算</div>
        </div>
        <div class="rgroup g-sens">
          <div class="g-items">
            ${this.ribbonItem(R.sensitivity, "敏感度", "w58 off", true)}
          </div>
          <div class="g-label">敏感度</div>
        </div>
        <div class="rgroup g-share">
          <div class="g-items">${this.ribbonItem(R.publish, "发布", "w56")}</div>
          <div class="g-label">共享</div>
        </div>
      </div>
      <div class="collapse">${ic(10, 7, svg`<path d="M1 6l4-4 4 4"/>`)}</div>
    </div>`;
  }

  private renderSlicers() {
    const years = ["FY19", "FY20", "FY21", "FY22"];
    const cats = ["A类", "B类", "C类", "D类", "E类", "F类", "G类", "H类", "I类", "J类"];
    return html`<div class="slicers">
      <div class="slicer">
        <div class="sl-head">年度 ${ic(12, 8, svg`<path d="M1 1l5 5 5-5" stroke="#666"/>`)}</div>
        <div class="sl-btns">
          <div class="sl-btn all">全选</div>
          ${years.map((y) => html`<div class="sl-btn">${y}</div>`)}
          <div class="sl-btn sel">FY23</div>
        </div>
      </div>
      <div class="slicer cat">
        <div class="sl-head">产品分类 ${ic(12, 8, svg`<path d="M1 1l5 5 5-5" stroke="#666"/>`)}</div>
        <div class="sl-btns">
          <div class="sl-btn all">全选</div>
          ${cats.map((c) => html`<div class="sl-btn ${c === "D类" ? "sel" : ""}">${c}</div>`)}
        </div>
      </div>
    </div>`;
  }

  private renderRankMatrix() {
    const n = RANKS.length;
    return html`<div class="m1">
      <div class="m1-h">大区内排名</div>
      ${REGIONS.map((r, i) => html`<div class="m1-h ${i === 5 ? "r-end" : ""}">${r}</div>`)}
      ${RANKS.map(
        (row, ri) => html`
          <div class="m1-r ${ri === n - 1 ? "last" : ""}">${ri + 1}</div>
          ${row.map((c, ci) => {
            const cls = `${ri === n - 1 ? "last" : ""} ${ci === 5 ? "r-end" : ""}`;
            if (!c) return html`<div class=${cls}></div>`;
            const pct = (Number(c[2].replace(/,/g, "")) / MAX_VALUE) * 100;
            return html`<div class="cell ${cls}">
              <div class="c-rank">${c[0]}</div>
              <div class="c-name">${c[1]}</div>
              <div class="c-val">${c[2]}</div>
              <div class="c-bar"><i style="width:${pct}%"></i></div>
            </div>`;
          })}
        `
      )}
    </div>`;
  }

  private renderTextMatrix() {
    const n = RANKS.length;
    return html`<div class="m2">
      <div class="m2-h">大区内排名</div>
      ${REGIONS.map((r, i) => html`<div class="m2-h ${i === 5 ? "r-end" : ""}">${r}</div>`)}
      ${RANKS.map(
        (row, ri) => html`
          <div class="m2-r ${ri === n - 1 ? "last" : ""}">${ri + 1}</div>
          ${row.map(
            (c, ci) => html`<div class="${ri === n - 1 ? "last" : ""} ${ci === 5 ? "r-end" : ""}">${c ? c[1] : ""}</div>`
          )}
        `
      )}
    </div>`;
  }

  private renderWell(title: string, label: string, hl: string, cls: string) {
    return html`<div class="b-label well-h">${title}</div>
      <div class="well ${cls}">
        <i class="hl ${hl}"></i>
        <div class="pill">
          ${label}
          <span class="x">
            ${ic(12, 12, svg`<path d="M1 1l10 10M11 1L1 11" stroke="#555"/>`)}
            <span class="bar"></span>
            ${ic(8, 12, svg`<path d="M2 1l4 5-4 5" stroke="#777"/>`)}
          </span>
        </div>
        <div class="add">+添加数据</div>
      </div>`;
  }

  private renderBuild() {
    return html`<div class="build">
      <h3>生成视觉对象</h3>
      <div class="b-label b-first">视觉对象类型</div>
      <div class="combo">
        <span class="cur">${ic(18, 18, svg`<rect x="1" y="1" width="16" height="16" fill="#2b88d8"/><rect x="1" y="1" width="16" height="4" fill="#666" stroke="none"/><path d="M6.5 5v12M11.5 5v12M2 9h15M2 13h15" stroke="#fff"/>`)}</span>
        ${ic(18, 18, svg`${tablePart(0.5, 0.5, 17, 17, 3, 4, "#555")}`)}
        <span class="sep"></span>
        <span class="cv">${ic(12, 8, svg`<path d="M1 1l5 5 5-5" stroke="#666"/>`)}</span>
      </div>
      <div class="suggest"><span class="toggle"><i></i></span>建议类型</div>
      ${this.renderWell("行", "大区内排名", "hl-r", "")}
      ${this.renderWell("列", "大区", "hl-g", "well-1")}
      ${this.renderWell("值", "02_大区内排名", "hl-y", "well-2")}
      <div class="tip">矩阵</div>
    </div>`;
  }

  private renderPage() {
    return html`<div class="page">
      <div class="head">
        <div class="mark"></div>
        <h1>动态排名多项展示</h1>
        <div class="stamp">
          ${ic(14, 14, svg`<path d="M4.500 2.800A5.500 5.500 0 1 0 9.500 2.800M4.500 0.500v2.500h2.500" stroke="#1f2654"/>`)}
          <span>2023/05/10 08:18:18</span>
        </div>
        <div class="logo">J</div>
      </div>
      ${this.renderSlicers()}
      <div class="sections">
        <div>
          <h2>省份在本大区内动态排名-SVG版</h2>
          <div class="card">${this.renderRankMatrix()}</div>
        </div>
        <div class="col-right">
          <h2>省份在本大区内动态排名-简单文字版</h2>
          <div class="vis-row">
            <div class="visual">
              ${this.renderTextMatrix()}
              <i class="handle h-tl"></i><i class="handle h-tr"></i>
              <i class="handle h-bl"></i><i class="handle h-br"></i>
              <div class="vis-head">
                <span>${ic(14, 18, svg`<path d="M1 2h12L8 9v8l-2-2V9z" stroke="#777"/>`)}</span>
                <span>${ic(16, 16, svg`<path d="M2 6V14h8M2 9h5v5M9 2h5v5M14 2L9 7" stroke="#777"/>`)}</span>
                <span>${ic(14, 4, svg`<path d="M1 2h2M6 2h2M11 2h2" stroke="#777" stroke-width="2"/>`)}</span>
              </div>
            </div>
            <div class="side-tabs">
              <span class="on">${ic(20, 22, svg`<rect x="2" y="9" width="5" height="11" fill="#fff"/><rect x="7" y="2" width="5" height="18" fill="#fff"/><path d="M12 10v9c0 2 6 2 6 0v-9" fill="#fff" stroke="#d9731a"/><ellipse cx="15" cy="10" rx="3" ry="1.5" fill="#fff" stroke="#d9731a"/>`)}</span>
              <span>${ic(18, 20, svg`<path d="M4 13L12 1l2 1-6 12z" fill="#fff" stroke="#555"/><path d="M1 17c3 0 2-4 5-5l3 2c0 3-4 4-8 3z" fill="#2b88d8" stroke="#1b6fc2"/><path d="M14 14v5M11.500 16.500h5" stroke="#2f9e57"/>`)}</span>
            </div>
            ${this.renderBuild()}
          </div>
        </div>
      </div>
      <div class="footer">
        <div class="url">
          ${ic(26, 28, svg`<path d="M10 3L3 10l7 7M4 10h10a6.500 6.500 0 0 1 1 13h-3" stroke="#1f2654" stroke-width="3"/>`)}
          www.jiaopengzi.com
        </div>
        <div>焦棚子</div>
        <div class="ver">v1.0.0.0</div>
      </div>
    </div>`;
  }

  private renderTree() {
    return TREE.map((r) => {
      const icon =
        r.icon === "calc" ? calcIcon : r.icon === "globe" ? globeIcon : r.icon === "sigma" ? sigmaIcon : r.kind === "tgroup" ? tableIcon : "";
      if (r.kind === "tgroup") {
        return html`<div class="row tgroup">
          <span class="chev">${r.open ? ic(12, 8, svg`<path d="M1 1l5 5 5-5" stroke="#777"/>`) : ic(8, 12, svg`<path d="M1 1l5 5-5 5" stroke="#777"/>`)}</span>
          <span class="tic">${icon}${r.used ? badge : ""}</span>
          <span class="txt">${r.label}</span>
        </div>`;
      }
      return html`<div class="row child">
        ${r.hl ? html`<i class="hl ${r.hl}"></i>` : ""}
        <span class="box ${r.on ? "on" : ""}">${r.on ? ic(10, 10, svg`<path d="M1.5 5l2.500 2.500 4.500-5" stroke="#fff" stroke-width="1.2"/>`) : ""}</span>
        <span class="tic">${icon}</span>
        <span class="txt">${r.label}</span>
      </div>`;
    });
  }

  private hiddenIcon() {
    return ic(14, 14, svg`<circle cx="6" cy="8" r="4" stroke="#999"/><path d="M2 2l10 11" stroke="#777"/>`);
  }

  render() {
    return html`
      ${this.renderTitlebar()} ${this.renderRibbon()}
      <div class="work">
        <div class="rail">
          ${ic(16, 16, svg`<path d="M1 15h14M3 14V8h2v6M7 14V3h2v11M11 14V6h2v8" stroke="#117865"/>`)}
          ${ic(16, 16, svg`<rect x="1" y="2" width="14" height="12" stroke="#777"/><path d="M1 6h14M1 10h14M5.500 2v12M10.500 2v12" stroke="#777"/>`)}
          ${ic(16, 16, svg`<rect x="1" y="1" width="6" height="6" stroke="#777"/><rect x="9" y="5" width="6" height="6" stroke="#777"/><rect x="1" y="10" width="6" height="5" stroke="#777"/>`)}
        </div>
        <div class="left-block">
          <div class="upper">
            <div class="canvas">${this.renderPage()}</div>
            <div class="filters">
              ${ic(14, 12, svg`<path d="M7 1L2 6l5 5M12 1L7 6l5 5" stroke="#1f3a8a"/>`)}
              ${ic(14, 14, svg`<path d="M13 1L2 6.500l5 1.500 1 5z" stroke="#333"/>`)}
              <div class="vtext">筛选器</div>
            </div>
          </div>
          <div class="pagetabs">
            <div class="pt pt-nav"><span>◀</span><span>▶</span></div>
            <div class="pt pt-home">Home</div>
            <div class="pt pt-nav2">${this.hiddenIcon()}Navigation</div>
            <div class="pt pt-noperm">${this.hiddenIcon()}NoPermission</div>
            <div class="pt pt-a01">${this.hiddenIcon()}A01</div>
            <div class="pt-add">${ic(14, 14, svg`<path d="M7 1v12M1 7h12" stroke="#fff" stroke-width="3"/>`)}</div>
          </div>
        </div>
        <div class="fields">
          <div class="f-head">
            <b>数据</b>
            ${ic(16, 10, svg`<path d="M1 1l7 7 7-7" stroke="#333"/>`)}
            ${ic(12, 12, svg`<path d="M1 1l10 10M11 1L1 11" stroke="#333"/>`)}
          </div>
          <div class="search">
            ${ic(14, 14, svg`<circle cx="9" cy="5" r="4" stroke="#555"/><path d="M6 8l-5 5" stroke="#555"/>`)}
            搜索
          </div>
          <div class="tree">${this.renderTree()}</div>
        </div>
        <div class="strip">
          <span class="on">${ic(16, 20, svg`<path d="M2 4v12c0 3 12 3 12 0V4" /><ellipse cx="8" cy="4" rx="6" ry="2.500"/>`)}</span>
          <span>${ic(20, 20, svg`<rect x="1" y="10" width="4" height="7"/><path d="M6 17V2h4v9"/><path d="M8 18l9-9 2 2-8 8z" fill="#2b88d8" stroke="#1b6fc2"/>`)}</span>
        </div>
      </div>
      <div class="status">
        第 4 页(共 4 页)
        <div class="zoom">
          ${ic(124, 14, svg`<path d="M2 7h6M14 7h96M62 2v10" stroke="#555"/><rect x="62" y="3" width="3" height="8" fill="#555" stroke="none"/><path d="M116 7h6M119 4v6" stroke="#2b88d8"/>`)}
          <span>120%</span>
          ${ic(15, 12, svg`<path d="M1 4V1h3M11 1h3v3M14 8v3h-3M4 11H1V8" stroke="#7a5ca8"/>`)}
        </div>
      </div>
      <div class="watermark">jiaopengzi.com</div>
    `;
  }
}
